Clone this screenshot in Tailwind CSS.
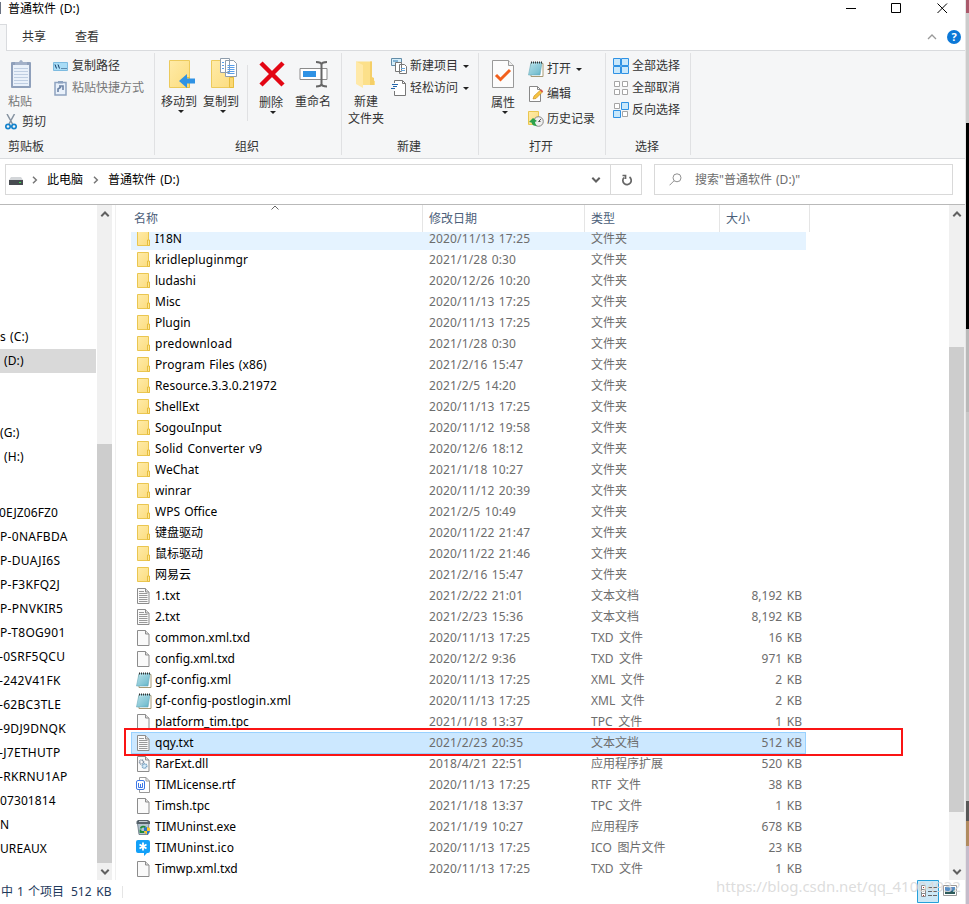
<!DOCTYPE html>
<html lang="zh-CN">
<head>
  <meta charset="UTF-8" />
  <meta name="viewport" content="width=device-width, initial-scale=1.0" />
  <title>普通软件 (D:)</title>
  <script src="https://cdn.jsdelivr.net/npm/@tailwindcss/browser@4"></script>
  <style>
    body { font-family: 'Noto Sans', 'Noto Sans CJK SC', sans-serif; word-spacing: 1px; }
  </style>
</head>
<body class="relative w-[969px] h-[904px] overflow-hidden bg-white text-xs leading-4 text-black whitespace-nowrap">

  <!-- Icon sprites -->
  <svg class="absolute w-0 h-0">
    <defs>
      <linearGradient id="gold" x1="0" y1="0" x2="1" y2="1"><stop offset="0" stop-color="#ffeba8"/><stop offset="1" stop-color="#fbdc7e"/></linearGradient>
      <linearGradient id="teal" x1="0" y1="0" x2="1" y2="1"><stop offset="0" stop-color="#c8ebf2"/><stop offset="1" stop-color="#5bb0c5"/></linearGradient>
    </defs>
    <symbol id="folder" viewBox="0 0 16 16">
      <path d="M1.5.5h11v9h1v5h-12z" fill="url(#gold)" stroke="#eac650"/>
      <path d="M11.5 14.5V9h2v5.500z" fill="#ffe793" stroke="#e6bd3e"/>
    </symbol>
    <symbol id="file" viewBox="0 0 16 16">
      <path d="M1.5.5h8L13 4v11.500H1.500z" fill="#fafafa" stroke="#8c8c8c"/>
      <path d="M9.500.5V4H13" fill="#ddd" stroke="#8c8c8c"/>
    </symbol>
    <symbol id="text" viewBox="0 0 16 16">
      <path d="M1.500.5h8L13 4v11.500H1.500z" fill="#fafafa" stroke="#8c8c8c"/>
      <path d="M9.500.5V4H13" fill="#ddd" stroke="#8c8c8c"/>
      <path d="M3 3.500h5M3 5.500h8.500M3 7.500h8.500M3 9.500h8.500M3 11.500h8.500M3 13.500h8.500" stroke="#999"/>
    </symbol>
    <symbol id="notepad" viewBox="0 0 16 16">
      <path d="M3 2.500h12v13H3z" fill="#fff" stroke="#a89a76"/>
      <path d="M3 1.500h11l-2 12.500H.5z" fill="url(#teal)" stroke="#6aa9b8" stroke-width=".6"/>
      <path d="M3 1.500h11.500" stroke="#333" stroke-width="2" stroke-dasharray="1 1"/>
      <path d="M3 5h9M2.600 7h9M2.200 9h9M2 11h9" stroke="#8dcad6" stroke-width=".6"/>
    </symbol>
    <symbol id="dll" viewBox="0 0 16 16">
      <path d="M1.500.5h8L13 4v11.500H1.500z" fill="#fafafa" stroke="#8c8c8c"/>
      <path d="M9.500.5V4H13" fill="#ddd" stroke="#8c8c8c"/>
      <circle cx="5.500" cy="6" r="2" fill="none" stroke="#8696a8" stroke-width="1.600" stroke-dasharray="1 .5"/>
      <circle cx="8.500" cy="10" r="2.200" fill="#d8ecf8" stroke="#7aa5c6" stroke-width="1.600" stroke-dasharray="1 .5"/>
    </symbol>
    <symbol id="rtf" viewBox="0 0 16 16">
      <path d="M3.500.5H10L13.500 4v11.500h-10z" fill="#fff" stroke="#999"/>
      <path d="M10 .5V4h3.500" fill="none" stroke="#999"/>
      <rect x=".5" y="3.500" width="8" height="9" rx="1.500" fill="#fff" stroke="#3e78e6"/>
      <path d="M2.500 6v4.500h4V6M4.500 7v3" fill="none" stroke="#3e78e6"/>
    </symbol>
    <symbol id="exe" viewBox="0 0 16 16">
      <path d="M1.500 4.500h11.500L12 15.500H3z" fill="#b4c4d0" stroke="#5d6f7c" stroke-width=".8"/>
      <path d="M2 1h10l2 1.500V5H.5V2.500z" fill="#56626b"/><path d="M3 2.500h8.500" stroke="#c3ccd2"/>
      <path d="M4.500 9.500a3 3 0 0 1 5-1M8 13H4.500v-2.500" fill="none" stroke="#228b3b" stroke-width="1.800"/>
      <path d="M8 9l3-1 3 1v3q0 2-3 3.500-3-1.500-3-3.500z" fill="#2478cc"/>
      <path d="M11 8l3 1v3h-3zM8 12h3v3.500q-3-1.500-3-3.500z" fill="#fcc62b"/>
    </symbol>
    <symbol id="ico" viewBox="0 0 16 16">
      <path d="M2 0h10a2 2 0 0 1 2 2v9a2 2 0 0 1-2 2h-1l-3 3v-3H2a2 2 0 0 1-2-2V2a2 2 0 0 1 2-2z" fill="#12a0f8"/>
      <path d="M7 2.500v8M3.500 4.500l7 4M10.500 4.500l-7 4" fill="none" stroke="#fff" stroke-width="1.800"/>
    </symbol>
    <symbol id="down" viewBox="0 0 6 3"><path d="M0 0h6L3 3z" fill="#222"/></symbol>
    <symbol id="chev" viewBox="0 0 10 6"><path d="M1.300.8L5 4.500 8.700.8" fill="none" stroke="#606060" stroke-width="2"/></symbol>
  </svg>

  <!-- Window -->
  <div class="flex flex-col w-[965px] h-[904px]">

    <!-- Title bar -->
    <header class="flex h-6 items-start">
      <div class="w-px h-3 mt-0.5 bg-gray-500"></div>
      <span class="ml-[7px] mt-px">普通软件 (D:)</span>
      <svg class="ml-auto mr-[17px] w-[103px] h-4" viewBox="0 0 103 16" fill="none" stroke="#000">
        <path d="M1 8.500h10M46.500 3.500h9v9h-9zM92.500 3.500l9.500 9.500M102 3.500L92.500 13"/>
      </svg>
    </header>

    <!-- Tabs -->
    <nav class="flex h-[27px] border-b border-[#d9dbde] text-[#333]">
      <div class="w-[7px] h-[27px] border-r border-t border-[#d9dbde] bg-[#f5f6f7]"></div>
      <span class="ml-[15px] mt-[5px]">共享</span>
      <span class="ml-[29px] mt-[5px]">查看</span>
      <svg class="ml-auto mr-1 mt-[5px] w-[34px] h-4" viewBox="0 0 34 16">
        <path d="M1 10l4-4 4 4" fill="none" stroke="#999" stroke-width="1.300"/>
        <circle cx="27" cy="8" r="7" fill="#0c78d7"/>
        <text x="27" y="12" text-anchor="middle" font-size="11" font-weight="bold" fill="#fff">?</text>
      </svg>
    </nav>

    <!-- Ribbon -->
    <section class="flex h-[108px] bg-[#f5f6f7] border-b border-[#d9dbde] text-[#333]">

      <!-- Clipboard -->
      <div class="flex flex-col w-[154px] h-[107px]">
        <div class="flex h-[88px]">
          <div class="w-[53px] pt-2">
            <svg class="ml-2.5 w-[22px] h-[30px]" viewBox="0 0 22 30">
              <rect x="1" y="3" width="20" height="26" rx="1" fill="#8fa0bb"/>
              <path d="M3 6h16v21H3z" fill="#eaf1fa"/>
              <path d="M5 6V3h4q2-4 4 0h4v3z" fill="#a3b1c8"/>
              <path d="M4 9.500h14M4 12.500h14M4 15.500h14M4 18.500h14M4 21.500h14M4 24.500h14" stroke="#bfcee2"/>
            </svg>
            <div class="ml-2 mt-[5px] text-[#777]">粘贴</div>
            <div class="flex mt-1 ml-[5px]">
              <svg class="w-3 h-4 mr-[5px]" viewBox="0 0 12 16" fill="none">
                <path d="M2 0l5.500 10M9.500 0L4 10" stroke="#8592a0" stroke-width="1.500"/>
                <circle cx="3" cy="12.500" r="2.200" stroke="#1683cc" stroke-width="1.700"/>
                <circle cx="9" cy="12.500" r="2.200" stroke="#1683cc" stroke-width="1.700"/>
              </svg>
              <span>剪切</span>
            </div>
          </div>
          <div class="pt-[7px]">
            <div class="flex items-center">
              <svg class="w-[15px] h-[9px] mr-1" viewBox="0 0 15 9">
                <path d="M.5.5h14v8H.5z" fill="#a8dcf6" stroke="#7dbbe0"/>
                <path d="M2 2.500l1.500 4M5 2.500l1.500 4M8.500 6.500h1M10.500 6.500h1M12.500 6.500h1" stroke="#123a66" fill="none"/>
              </svg>
              <span>复制路径</span>
            </div>
            <div class="flex items-center mt-1.5 text-[#777]">
              <svg class="w-[15px] h-4 mr-1" viewBox="0 0 15 16">
                <path d="M2 2.500h11v12.500H2z" fill="#e9f1fb" stroke="#8ea3c0" stroke-width="1.500"/>
                <path d="M5 1h5v2.500H5z" fill="#8ea3c0"/>
                <path d="M5 12V9l3-2M6 6h4v4" fill="none" stroke="#6c83a5" stroke-width="1.600"/>
              </svg>
              <span>粘贴快捷方式</span>
            </div>
          </div>
        </div>
        <div class="ml-2">剪贴板</div>
      </div>
      <div class="w-px h-[102px] mt-0.5 bg-[#e0e1e3]"></div>

      <!-- Organize -->
      <div class="flex flex-col w-[186px]">
        <div class="flex h-[88px] pl-[3px]">
          <div class="flex flex-col items-center w-[42px] pt-[7px]">
            <svg class="w-8 h-8" viewBox="0 0 32 32">
              <path d="M6.500 2.500h20v27h-20z" fill="url(#gold)" stroke="#ecca5c"/>
              <path d="M23.500 19.500h3v10h-3z" fill="#fbd873" stroke="#e6bd3e"/>
              <path d="M16 23l8-7v4.500h8v5h-8V30z" fill="#2f92e4"/>
            </svg>
            <span class="mt-1">移动到</span>
            <svg class="w-1.5 h-[3px] ml-1"><use href="#down"/></svg>
          </div>
          <div class="flex flex-col items-center w-[42px] pt-[7px]">
            <svg class="w-8 h-8" viewBox="0 0 32 32">
              <path d="M6.500 2.500h22v27h-22z" fill="url(#gold)" stroke="#ecca5c"/>
              <path d="M24.500 19.500h4v10h-4z" fill="#fbd873" stroke="#e6bd3e"/>
              <path d="M15.500.5h9v14h-9zM20.500 2.500h8l3 3V18.500h-11z" fill="#fff" stroke="#8e9dac"/>
              <path d="M17 4.500h2M17 7.500h2M17 10.500h2M22.500 7.500h7M22.500 9.500h7M22.500 11.500h7M22.500 13.500h7M22.500 15.500h7" stroke="#5a9fe8"/>
            </svg>
            <span class="mt-1">复制到</span>
            <svg class="w-1.5 h-[3px] ml-1"><use href="#down"/></svg>
          </div>
          <div class="w-px h-14 ml-[5px] mt-3.5 bg-[#e0e1e3]"></div>
          <div class="flex flex-col items-center w-[42px] ml-0.5 pt-[7px]">
            <svg class="w-8 h-8" viewBox="0 0 32 32">
              <path d="M6 5l22 22M28 5L6 27" stroke="#e30613" stroke-width="4.500"/>
            </svg>
            <span class="mt-[5px]">删除</span>
            <svg class="w-1.5 h-[3px] ml-1"><use href="#down"/></svg>
          </div>
          <div class="flex flex-col items-center w-[42px] pt-[7px]">
            <svg class="w-8 h-8" viewBox="0 0 32 32">
              <path d="M3 10.500h27v11H3z" fill="#fff" stroke="#8b8b8b"/>
              <path d="M6 13h13v6H6z" fill="#2f92e4"/>
              <path d="M19 4q5 0 5.500 2.500Q25 4 30 4M24.500 5v22M19 28.500q5 0 5.500-2.500 .5 2.500 5.500 2.500" fill="none" stroke="#666" stroke-width="2"/>
            </svg>
            <span class="mt-1">重命名</span>
          </div>
        </div>
        <div class="pr-0.5 text-center">组织</div>
      </div>
      <div class="w-px h-[102px] mt-0.5 bg-[#e0e1e3]"></div>

      <!-- New -->
      <div class="flex flex-col w-[136px]">
        <div class="flex h-[88px]">
          <div class="flex flex-col items-center w-12 pt-[7px]">
            <svg class="w-8 h-8" viewBox="0 0 32 32">
              <path d="M6 3.500h16V22l3 1v4H12z" fill="#fce08a"/>
              <path d="M22 3.500V19l2 1v7h-4V3.500z" fill="#f5cf68"/>
              <path d="M6 3.500l7 3.500v23l-7-4z" fill="#ffe9a8"/>
            </svg>
            <span class="mt-1">新建</span>
            <span class="mt-px">文件夹</span>
          </div>
          <div class="pt-[7px] pl-px">
            <div class="flex items-center">
              <svg class="w-4 h-4 mr-[3px]" viewBox="0 0 16 16">
                <path d="M.5.5h10v7H.5z" fill="#d5eefa" stroke="#628ca8"/><path d="M2 3h5" stroke="#2f78b0"/>
                <path d="M4.500 4.500h6v9h-6zM8.500 6.500h5l2 2v7h-7z" fill="#fff" stroke="#777"/>
                <path d="M10 10.500h4M10 12.500h4" stroke="#67a7dc"/>
              </svg>
              <span>新建项目</span>
              <svg class="w-1.5 h-[3px] ml-[5px]"><use href="#down"/></svg>
            </div>
            <div class="flex items-center mt-1.5">
              <svg class="w-4 h-4 mr-[3px]" viewBox="0 0 16 16">
                <path d="M3.500 3V.5h8l3 3v12h-11V11" fill="#fff" stroke="#777"/>
                <path d="M11.500.5v3h3" fill="none" stroke="#777"/>
                <path d="M1 4.500h6M2 6.500h4M0 8.500h4" stroke="#2466ac" stroke-width="1.200"/>
              </svg>
              <span>轻松访问</span>
              <svg class="w-1.5 h-[3px] ml-[5px]"><use href="#down"/></svg>
            </div>
          </div>
        </div>
        <div class="pr-0.5 text-center">新建</div>
      </div>
      <div class="w-px h-[102px] mt-0.5 bg-[#e0e1e3]"></div>

      <!-- Open -->
      <div class="flex flex-col w-[126px]">
        <div class="flex h-[88px]">
          <div class="flex flex-col items-center w-12 pt-[7px]">
            <svg class="w-8 h-8" viewBox="0 0 32 32">
              <path d="M5.500 2.500h16l5 5v22h-21z" fill="#fcfcfc" stroke="#999"/>
              <path d="M21.500 2.500v5h5" fill="#eee" stroke="#999"/>
              <path d="M9 17l4.500 4.500L23 12" fill="none" stroke="#f2601d" stroke-width="3"/>
            </svg>
            <span class="mt-[5px]">属性</span>
            <svg class="w-1.5 h-[3px] ml-1"><use href="#down"/></svg>
          </div>
          <div class="pt-2.5 pl-px">
            <div class="flex items-center">
              <svg class="w-4 h-4 mr-[3px]"><use href="#notepad"/></svg>
              <span>打开</span>
              <svg class="w-1.5 h-[3px] ml-[5px]"><use href="#down"/></svg>
            </div>
            <div class="flex items-center mt-[9px]">
              <svg class="w-4 h-4 mr-[3px]" viewBox="0 0 16 16">
                <path d="M1.500.5h8l3 3v12h-11z" fill="#fff" stroke="#888"/>
                <path d="M9.500.5v3h3" fill="none" stroke="#888"/>
                <path d="M5 13l1-3 6.500-6 2 2L8 12.500z" fill="#f5c443" stroke="#c98a1a" stroke-width=".6"/>
                <path d="M12 4.500l1.200-1.200 2 2L14 6.500z" fill="#d8534b"/>
              </svg>
              <span>编辑</span>
            </div>
            <div class="flex items-center mt-[9px]">
              <svg class="w-4 h-4 mr-[3px]" viewBox="0 0 16 16">
                <path d="M.5.5h10v13H.5z" fill="url(#gold)" stroke="#eac650"/>
                <circle cx="10.500" cy="10.500" r="4.800" fill="#eee" stroke="#888"/>
                <path d="M10.500 10.500L13 8M10.500 10.500h2" stroke="#555"/>
                <path d="M1 11l4-4 4 3-2 1q0 2 2 4-5 0-5.500-3.500z" fill="#2ca14c"/>
              </svg>
              <span>历史记录</span>
            </div>
          </div>
        </div>
        <div class="pr-0.5 text-center">打开</div>
      </div>
      <div class="w-px h-[102px] mt-0.5 bg-[#e0e1e3]"></div>

      <!-- Select -->
      <div class="flex flex-col w-[84px]">
        <div class="h-[88px] pt-[7px] pl-[7px]">
          <div class="flex items-center">
            <svg class="w-4 h-4 mr-[3px]" viewBox="0 0 16 16" fill="#c9e8fb" stroke="#2f92e4">
              <path d="M.5.5h7v7h-7zM8.500.5h7v7h-7zM.5 8.500h7v7h-7zM8.500 8.500h7v7h-7z"/>
            </svg>
            <span>全部选择</span>
          </div>
          <div class="flex items-center mt-1.5">
            <svg class="w-4 h-4 mr-[3px]" viewBox="0 0 16 16" fill="#fff" stroke="#a5a5a5">
              <path d="M1.500 1.500h5v5h-5zM9.500 1.500h5v5h-5zM1.500 9.500h5v5h-5zM9.500 9.500h5v5h-5z"/>
            </svg>
            <span>全部取消</span>
          </div>
          <div class="flex items-center mt-1.5">
            <svg class="w-4 h-4 mr-[3px]" viewBox="0 0 16 16">
              <path d="M1.500 1.500h5v5h-5zM9.500 9.500h5v5h-5z" fill="#fff" stroke="#a5a5a5"/>
              <path d="M8.500.5h7v7h-7zM.5 8.500h7v7h-7z" fill="#c9e8fb" stroke="#2f92e4"/>
            </svg>
            <span>反向选择</span>
          </div>
        </div>
        <div class="pr-0.5 text-center">选择</div>
      </div>
      <div class="w-px h-[102px] mt-0.5 bg-[#e0e1e3]"></div>
    </section>

    <!-- Address bar and search -->
    <section class="flex h-[46px] pt-[5px] pl-[5px] border-b border-[#b9b9b9]">
      <div class="flex items-center w-[637px] h-[31px] border border-[#d9d9d9]">
        <svg class="w-3.5 h-2 ml-[3px] mt-0.5" viewBox="0 0 14 8">
          <path d="M2 0h10l2 3H0z" fill="#d3d6d9"/><path d="M0 3h14v5H0z" fill="#474b50"/><path d="M10 5h2v1h-2z" fill="#3be04e"/>
        </svg>
        <svg class="w-1.5 h-2 ml-[9px]" viewBox="0 0 6 8"><path d="M1 .8L4.300 4 1 7.200" fill="none" stroke="#777" stroke-width="1.500"/></svg>
        <span class="ml-[9px]">此电脑</span>
        <svg class="w-1.5 h-2 ml-2.5" viewBox="0 0 6 8"><path d="M1 .8L4.300 4 1 7.200" fill="none" stroke="#777" stroke-width="1.500"/></svg>
        <span class="ml-[9px]">普通软件 (D:)</span>
        <svg class="w-2.5 h-1.5 ml-auto mr-[9px]"><use href="#chev"/></svg>
        <div class="flex items-center justify-center w-[31px] h-[29px] pl-px border-l border-[#d9d9d9]">
          <svg class="w-3 h-3" viewBox="0 0 12 12" fill="none" stroke="#666" stroke-width="1.700">
            <path d="M8.500 3A4.200 4.200 0 1 1 3 3.500M1.500 1.500h3v3.500"/>
          </svg>
        </div>
      </div>
      <div class="flex items-center w-[299px] h-[31px] ml-3 border border-[#d9d9d9] text-[#6d6d6d]">
        <svg class="w-[13px] h-[13px] ml-[14px] mr-[13px]" viewBox="0 0 13 13" fill="none" stroke="#909090">
          <circle cx="8" cy="4.800" r="4"/><path d="M5 7.800L.5 12.300"/>
        </svg>
        <span>搜索"普通软件 (D:)"</span>
      </div>
    </section>

    <!-- Panes -->
    <main class="flex h-[675px] overflow-hidden">

      <!-- Navigation tree -->
      <aside class="flex w-[116px] border-r border-[#f0f0f0]">
        <div id="tree" class="w-[97px] pt-[120px] overflow-hidden"></div>
        <div class="flex flex-col items-center w-[15px] bg-[#f0f0f0]">
          <svg class="w-2.5 h-1.5 mt-1.5 rotate-180"><use href="#chev"/></svg>
          <div class="w-[15px] h-[419px] mt-[227px] bg-[#cdcdcd]"></div>
          <svg class="w-2.5 h-1.5 mt-1.5"><use href="#chev"/></svg>
        </div>
      </aside>

      <!-- File list -->
      <div class="w-[833px]">
        <div class="flex h-[27px] pl-[18px] text-[#4c607a]">
          <div class="relative w-[289px] pt-1.5 border-r border-[#e5e5e5]">名称
            <svg class="absolute left-[137px] top-0 w-2 h-[5px]" viewBox="0 0 8 5"><path d="M.5 4.500L4 1l3.500 3.500" fill="none" stroke="#666"/></svg>
          </div>
          <div class="w-[162px] pt-1.5 pl-1.5 border-r border-[#e5e5e5]">修改日期</div>
          <div class="w-[135px] pt-1.5 pl-1.5 border-r border-[#e5e5e5]">类型</div>
          <div class="w-[90px] pt-1.5 pl-1.5 border-r border-[#e5e5e5]">大小</div>
        </div>
        <div class="h-[648px] pl-[15px] overflow-hidden">
          <div id="files" class="-mt-1"></div>
        </div>
      </div>

      <!-- List scrollbar -->
      <div class="flex flex-col w-4 bg-[#f0f0f0]">
        <svg class="w-2.5 h-1.5 ml-[3px] mt-1.5 rotate-180"><use href="#chev"/></svg>
        <div class="w-[15px] h-[465px] mt-[130px] bg-[#cdcdcd]"></div>
        <svg class="w-2.5 h-1.5 ml-[3px] mt-[57px]"><use href="#chev"/></svg>
      </div>
    </main>

    <!-- Status bar -->
    <footer class="flex h-6 pt-1 text-[#1e395b]">
      <span class="ml-px w-[70px]">中 1 个项目</span>
      <span class="w-[51px] [word-spacing:1.5px]">512 KB</span>
      <div class="w-px h-3 mt-0.5 bg-[#e5e5e5]"></div>
      <svg class="ml-auto -mt-1 mr-[7px] w-[41px] h-6" viewBox="0 0 41 24">
        <path d="M.5.5h21v22H.5z" fill="#cce8f6" stroke="#26a0da"/>
        <path d="M4.500 5.500h4v11h-4zM4.500 9.500h4M4.500 13.500h4" fill="#fff" stroke="#8a8a8a"/>
        <path d="M6 7.500h1M6 11.500h1M6 15.500h1" stroke="#a33"/>
        <path d="M11 7.500h4M16 7.500h4M11 11.500h4M16 11.500h4M11 15.500h4M16 15.500h4" stroke="#666"/>
        <path d="M26.500 5.500h13v10h-13z" fill="#fff" stroke="#999"/>
        <path d="M28 7h10v7H28z" fill="#5b8fc5"/><path d="M28 11l5 1 5-3v5H28z" fill="#2d5a58"/>
      </svg>
    </footer>
  </div>

  <!-- Sliver of the windows behind -->
  <div class="absolute top-0 left-[965px] flex w-1 h-[904px] border-l border-[#e6e6e6] flex-col">
    <div class="h-[13px] bg-[#a9596b]"></div>
    <div class="h-[110px] bg-[#cccccc]"></div>
    <div class="h-[206px] bg-black"></div>
    <div class="h-[83px] bg-[#b9b9b9]"></div>
    <div class="h-[389px] bg-[#c8c8c8]"></div>
    <div class="h-5 bg-[#585858]"></div>
    <div class="h-[25px] bg-[#b08b60]"></div>
    <div class="h-[58px] bg-[#c5bccb]"></div>
  </div>

  <!-- Highlight and watermark -->
  <div class="absolute left-[124px] top-[728px] w-[779px] h-[28px] border-2 border-[#fa1414]"></div>
  <div class="absolute left-[716px] top-[877px] text-[15px] leading-[18px] tracking-[-0.05px] text-[#d9d9d9]/90">https://blog.csdn.net/qq_41004932</div>

<script>
  // [label, left offset, gap above]
  const tree = [
    ['s (C:)', 0, 0], [' (D:)', 4, 0], ['(G:)', 0, 48], ['(H:)', 4, 0],
    ['0EJZ06FZ0', -1, 32], ['P-0NAFBDA', 0, 0], ['P-DUAJI6S', 0, 0], ['P-F3KFQ2J', 0, 0],
    ['P-PNVKIR5', 0, 0], ['P-T8OG901', 0, 0], ['-0SRF5QCU', -1, 0], ['-242V41FK', -1, 0],
    ['-62BC3TLE', -1, 0], ['-9DJ9DNQK', -1, 0], ['-J7ETHUTP', -1, 0], ['-RKRNU1AP', -1, 0],
    ['07301814', 0, 0], ['N', 0, 0], ['UREAUX', 0, 0]
  ];

  document.getElementById('tree').innerHTML = tree.map(([label, x, gap], i) => `
    <div class="h-6 w-24 pt-1 ${label.includes('-') ? 'tracking-[0.3px]' : 'tracking-[0.1px]'} ${i === 1 ? 'bg-[#d9d9d9]' : ''}" style="margin-top:${gap}px">
      <div style="margin-left:${x}px">${label}</div>
    </div>`).join('');

  // [icon, name, modified, type, size]
  const files = [
    ['folder', 'I18N', '2020/11/13 17:25', '文件夹', ''],
    ['folder', 'kridlepluginmgr', '2021/1/28 0:30', '文件夹', ''],
    ['folder', 'ludashi', '2020/12/26 10:20', '文件夹', ''],
    ['folder', 'Misc', '2020/11/13 17:25', '文件夹', ''],
    ['folder', 'Plugin', '2020/11/13 17:25', '文件夹', ''],
    ['folder', 'predownload', '2021/1/28 0:30', '文件夹', ''],
    ['folder', 'Program Files (x86)', '2021/2/16 15:47', '文件夹', ''],
    ['folder', 'Resource.3.3.0.21972', '2021/2/5 14:20', '文件夹', ''],
    ['folder', 'ShellExt', '2020/11/13 17:25', '文件夹', ''],
    ['folder', 'SogouInput', '2020/11/12 19:58', '文件夹', ''],
    ['folder', 'Solid Converter v9', '2020/12/6 18:12', '文件夹', ''],
    ['folder', 'WeChat', '2021/1/18 10:27', '文件夹', ''],
    ['folder', 'winrar', '2020/11/12 20:39', '文件夹', ''],
    ['folder', 'WPS Office', '2021/2/5 10:49', '文件夹', ''],
    ['folder', '键盘驱动', '2020/11/22 21:47', '文件夹', ''],
    ['folder', '鼠标驱动', '2020/11/22 21:46', '文件夹', ''],
    ['folder', '网易云', '2021/2/16 15:47', '文件夹', ''],
    ['text', '1.txt', '2021/2/22 21:01', '文本文档', '8,192 KB'],
    ['text', '2.txt', '2021/2/23 15:36', '文本文档', '8,192 KB'],
    ['file', 'common.xml.txd', '2020/11/13 17:25', 'TXD 文件', '16 KB'],
    ['file', 'config.xml.txd', '2020/12/2 9:36', 'TXD 文件', '971 KB'],
    ['notepad', 'gf-config.xml', '2020/11/13 17:25', 'XML 文件', '2 KB'],
    ['notepad', 'gf-config-postlogin.xml', '2020/11/13 17:25', 'XML 文件', '2 KB'],
    ['file', 'platform_tim.tpc', '2021/1/18 13:37', 'TPC 文件', '1 KB'],
    ['text', 'qqy.txt', '2021/2/23 20:35', '文本文档', '512 KB'],
    ['dll', 'RarExt.dll', '2018/4/21 22:51', '应用程序扩展', '520 KB'],
    ['rtf', 'TIMLicense.rtf', '2020/11/13 17:25', 'RTF 文件', '38 KB'],
    ['file', 'Timsh.tpc', '2021/1/18 13:37', 'TPC 文件', '1 KB'],
    ['exe', 'TIMUninst.exe', '2021/1/19 10:27', '应用程序', '678 KB'],
    ['ico', 'TIMUninst.ico', '2020/11/13 17:25', 'ICO 图片文件', '23 KB'],
    ['file', 'Timwp.xml.txd', '2020/11/13 17:25', 'TXD 文件', '1 KB']
  ];

  const rowStyle = {
    'I18N': 'bg-[#e5f3ff] border-transparent',
    'qqy.txt': 'bg-[#cce8ff] border-[#99d1ff]'
  };

  const nameStyle = {
    'kridlepluginmgr': 'tracking-[0.14px]',
    'predownload': 'tracking-[0.25px]',
    'Program Files (x86)': 'tracking-[0.1px]',
    'Resource.3.3.0.21972': 'tracking-[0.12px]',
    'Solid Converter v9': 'tracking-[0.14px]',
    'gf-config.xml': 'tracking-[0.15px]',
    'gf-config-postlogin.xml': 'tracking-[0.22px]',
    'TIMUninst.ico': 'tracking-[0.1px]'
  };

  document.getElementById('files').innerHTML = files.map(([icon, name, date, type, size]) => `
    <div class="flex w-[675px] h-[22px] -mb-px pt-[3px] border leading-[14px] ${rowStyle[name] || 'border-transparent'} text-[#6d6d6d]">
      <svg class="w-4 h-4 ml-1 mr-[3px] -mt-px"><use href="#${icon}"/></svg>
      <span class="w-[274px] text-black ${nameStyle[name] || ''}">${name}</span>
      <span class="w-[162px] tracking-[0.16px]">${date}</span>
      <span class="w-[131px] [word-spacing:2.5px]">${type}</span>
      <span class="w-20 text-right [word-spacing:1.5px]">${size}</span>
    </div>`).join('');
</script>
</body>
</html>
